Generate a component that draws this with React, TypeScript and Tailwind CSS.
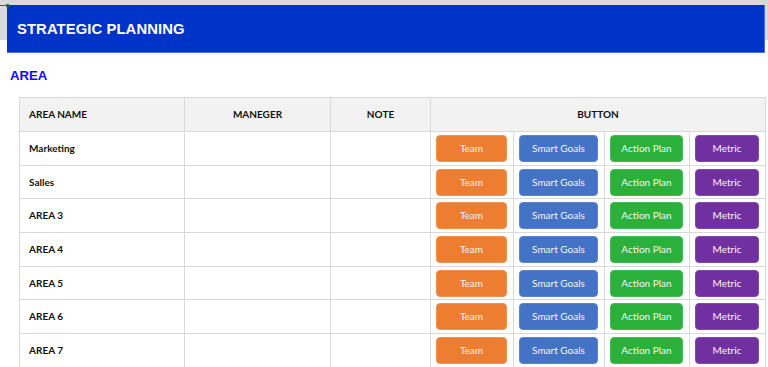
import React from "react";

const rows = ["Marketing", "Salles", "AREA 3", "AREA 4", "AREA 5", "AREA 6", "AREA 7"];

const buttons = [
  { label: "Team", cls: "bg-[#ed7d31] border-[#f0914f]" },
  { label: "Smart Goals", cls: "bg-[#4472c4] border-[#5b84cc]" },
  { label: "Action Plan", cls: "bg-[#2bb03b] border-[#45bb53]" },
  { label: "Metric", cls: "bg-[#7030a0] border-[#8248ad]" },
];

const cell = "border-r border-b border-[#d9d9d9] flex items-center";

export default function App() {
  return (
    <div className="relative w-[768px] h-[367px] overflow-hidden bg-white" style={{ fontFamily: "Lato, 'Liberation Sans', sans-serif" }}>
      <div className="pt-[5px] pl-[7px] pr-[3px] bg-[linear-gradient(to_bottom,#d9d9d9_40px,#ffffff_40px)]">
        <div className="h-[48px] bg-[#0033c8] border-r border-b border-[#4a6fe0] flex items-center pl-[10px] pt-px">
          <span className="text-white font-bold text-[14.8px] font-['Liberation_Sans',Arial,sans-serif] tracking-[0.1px]">
            STRATEGIC PLANNING
          </span>
        </div>
      </div>
      <div className="absolute left-0 top-[5px] w-[7px] h-px bg-[#217346]" />
      <div className="absolute left-[6px] top-[4px] w-[3px] h-[3px] bg-[#217346]" />

      <div className="pl-[10px] pt-[16px] h-[44px]">
        <span className="block text-[#0a0aff] font-bold text-[13.2px] leading-[14px] font-['Liberation_Sans',Arial,sans-serif]">AREA</span>
      </div>

      <div className="ml-[19px] w-[747px] border-l border-t border-[#d9d9d9] grid grid-cols-[165px_146px_100px_83px_91px_85px_76px] grid-rows-[34px_34px_33px_34px_34px_33px_34px_34px] text-[10px] font-bold text-[#111111]">
        <div className={`${cell} bg-[#f2f2f2] pl-[9px]`}>AREA NAME</div>
        <div className={`${cell} bg-[#f2f2f2] justify-center`}>MANEGER</div>
        <div className={`${cell} bg-[#f2f2f2] justify-center`}>NOTE</div>
        <div className={`${cell} bg-[#f2f2f2] justify-center col-span-4`}>BUTTON</div>
        {rows.map((r) => (
          <React.Fragment key={r}>
            <div className={`${cell} pl-[9px]`}>{r}</div>
            <div className={cell} />
            <div className={cell} />
            {buttons.map((b) => (
              <div key={b.label} className={`${cell} pl-[5px] pr-[6px]`}>
                <div
                  className={`w-full h-[27px] rounded-[4px] border ${b.cls} flex items-center justify-center text-[#f6f6f6] font-normal text-[10px]`}
                >
                  {b.label}
                </div>
              </div>
            ))}
          </React.Fragment>
        ))}
      </div>
    </div>
  );
}
